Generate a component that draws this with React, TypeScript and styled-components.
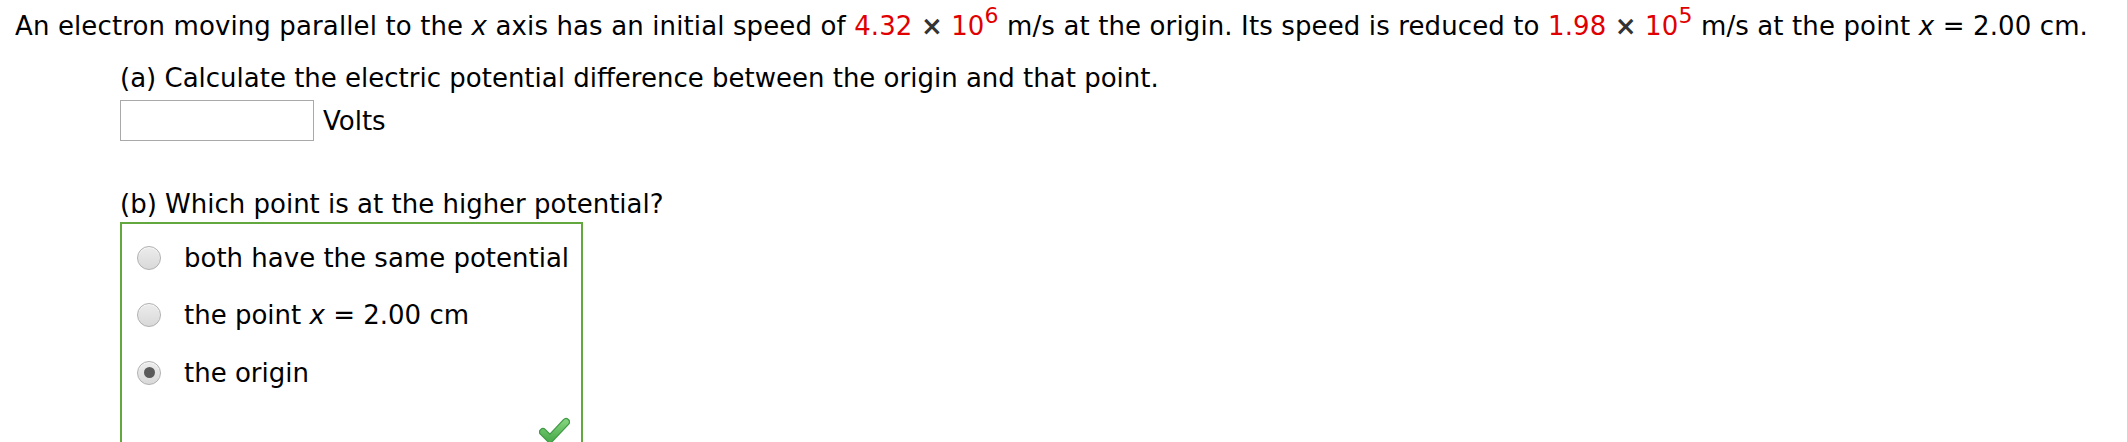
import React from "react";
import styled, { createGlobalStyle } from "styled-components";

const Global = createGlobalStyle`
  html, body { margin: 0; padding: 0; background: #ffffff; }
  body {
    font-family: "DejaVu Sans", Verdana, sans-serif;
    color: #000000;
    font-size: 26px;
  }
`;

const Page = styled.div`
  padding: 10px 0 0 15px;
  box-sizing: border-box;
  height: 442px;
  overflow: hidden;
`;

const Question = styled.p`
  margin: 0;
  line-height: 32px;
  white-space: nowrap;
  letter-spacing: 0.12px;
`;

const Red = styled.span`
  color: #e00000;
`;

const Times = styled.span`
  font-weight: bold;
  color: #333333;
`;

const Sup = styled.span`
  position: relative;
  top: -12px;
  font-size: 22px;
  line-height: 0;
`;

const Var = styled.i`
  font-style: italic;
`;

const Parts = styled.div`
  margin-left: 105px;
`;

const PartLabel = styled.p<{ $top: number }>`
  margin: ${(p) => p.$top}px 0 0 0;
  line-height: 32px;
  white-space: nowrap;
`;

const AnswerRow = styled.div`
  display: flex;
  align-items: center;
  gap: 9px;
  margin-top: 6px;
`;

const TextInput = styled.input`
  width: 194px;
  height: 41px;
  box-sizing: border-box;
  border: 1px solid #a9a9a9;
  margin: 0;
  padding: 0;
  font: inherit;
`;

const Unit = styled.span`
  line-height: 32px;
`;

const ChoiceBox = styled.div`
  margin-top: 2px;
  width: 463px;
  box-sizing: border-box;
  border: 2px solid #62a83e;
  padding: 5px 11px 40px 15px;
`;

const Choice = styled.label`
  display: flex;
  align-items: center;
  height: 57.5px;
  gap: 23px;
  line-height: 32px;
  white-space: nowrap;
`;

const Radio = styled.input.attrs({ type: "radio" })`
  appearance: none;
  -webkit-appearance: none;
  margin: 0;
  width: 24px;
  height: 24px;
  border-radius: 50%;
  border: 1px solid #b0b0b0;
  box-sizing: border-box;
  background: linear-gradient(#ececec, #d9d9d9);
  box-shadow: inset 0 1px 1px rgba(255, 255, 255, 0.7);
  display: grid;
  place-items: center;
  flex: none;
  &:checked::after {
    content: "";
    width: 11px;
    height: 11px;
    border-radius: 50%;
    background: #5a5a5a;
  }
`;

const CheckRow = styled.div`
  display: flex;
  justify-content: flex-end;
  margin-top: 15px;
`;

const CheckMark = () => (
  <svg width="31" height="28" viewBox="0 0 31 28">
    <defs>
      <linearGradient id="chk" x1="0" y1="0" x2="0" y2="1">
        <stop offset="0" stopColor="#7fd07a" />
        <stop offset="1" stopColor="#4fae4f" />
      </linearGradient>
    </defs>
    <path
      d="M4 15 L11 22 L27 5"
      fill="none"
      stroke="#3f9a45"
      strokeWidth="8"
      strokeLinecap="round"
      strokeLinejoin="round"
    />
    <path
      d="M4 15 L11 22 L27 5"
      fill="none"
      stroke="url(#chk)"
      strokeWidth="5.5"
      strokeLinecap="round"
      strokeLinejoin="round"
    />
  </svg>
);

const choices = [
  { id: "same", label: <>both have the same potential</>, checked: false },
  {
    id: "point",
    label: (
      <>
        the point <Var>x</Var> = 2.00 cm
      </>
    ),
    checked: false,
  },
  { id: "origin", label: <>the origin</>, checked: true },
];

export default function App() {
  return (
    <>
      <Global />
      <Page>
        <Question>
          An electron moving parallel to the <Var>x</Var> axis has an initial speed of{" "}
          <Red>4.32</Red> <Times>×</Times> <Red>10<Sup>6</Sup></Red> m/s at the origin. Its
          speed is reduced to <Red>1.98</Red> <Times>×</Times> <Red>10<Sup>5</Sup></Red> m/s at
          the point <Var>x</Var> = 2.00 cm.
        </Question>
        <Parts>
          <PartLabel $top={20}>
            (a) Calculate the electric potential difference between the origin and that point.
          </PartLabel>
          <AnswerRow>
            <TextInput type="text" aria-label="Volts" />
            <Unit>Volts</Unit>
          </AnswerRow>
          <PartLabel $top={47}>(b) Which point is at the higher potential?</PartLabel>
          <ChoiceBox>
            {choices.map((c) => (
              <Choice key={c.id}>
                <Radio name="higher" defaultChecked={c.checked} />
                <span>{c.label}</span>
              </Choice>
            ))}
            <CheckRow>
              <CheckMark />
            </CheckRow>
          </ChoiceBox>
        </Parts>
      </Page>
    </>
  );
}
